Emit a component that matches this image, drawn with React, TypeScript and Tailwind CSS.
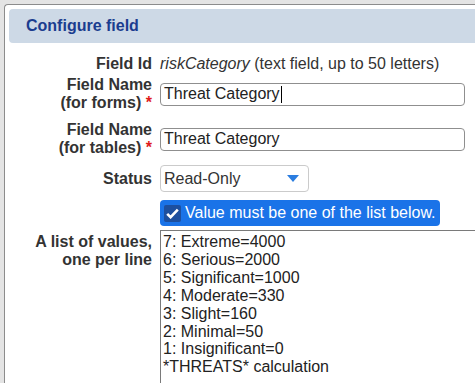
import React from "react";

const Label = ({ children, className = "" }: { children: React.ReactNode; className?: string }) => (
  <div className={"w-[143px] shrink-0 text-right font-bold text-[16px] leading-[18px] text-[#333] " + className}>{children}</div>
);

export default function App() {
  return (
    <div className="w-[475px] h-[383px] overflow-hidden bg-[#e4e4e4] pt-[4px] pl-[4px] font-['Liberation_Sans',Arial,sans-serif]">
      <div className="h-[400px] w-[520px] bg-white border-l border-t border-[#8c8c8c] rounded-tl-[4px] pl-[4px] pt-[4px]">
        <div className="h-[34px] w-[480px] bg-[#cdd9e6] rounded-[4px] pl-[17px] flex items-center">
          <span className="text-[16px] font-bold text-[#1b3d8f]">Configure field</span>
        </div>

        <div className="mt-[12px] flex items-center gap-[8px]">
          <Label>Field Id</Label>
          <div className="text-[16px] leading-[18px] text-[#333] whitespace-nowrap">
            <i>riskCategory</i> (text field, up to 50 letters)
          </div>
        </div>

        <div className="mt-[3px] flex items-center gap-[8px]">
          <Label>
            Field Name
            <br />
            (for forms) <span className="text-[#e01b1b]">*</span>
          </Label>
          <div className="w-[305px] h-[23px] border border-[#8f8f8f] rounded-[4px] pl-[3px] flex items-center text-[16px] text-[#222]">
            Threat Category<span className="inline-block w-[1px] h-[17px] bg-black ml-[1px]" />
          </div>
        </div>

        <div className="mt-[9px] flex items-center gap-[8px]">
          <Label>
            Field Name
            <br />
            (for tables) <span className="text-[#e01b1b]">*</span>
          </Label>
          <div className="w-[305px] h-[23px] border border-[#8f8f8f] rounded-[4px] pl-[3px] flex items-center text-[16px] text-[#222]">
            Threat Category
          </div>
        </div>

        <div className="mt-[8px] flex items-center gap-[8px]">
          <Label>Status</Label>
          <div className="w-[149px] h-[27px] border border-[#cbcbcb] rounded-[4px] pl-[3px] pr-[9px] flex items-center justify-between text-[16px] text-[#333]">
            <span>Read-Only</span>
            <svg width="12" height="7" viewBox="0 0 12 7">
              <path d="M0 0 L12 0 L6 7 Z" fill="#2b7de0" />
            </svg>
          </div>
        </div>

        <div className="mt-[8px] flex items-center gap-[8px]">
          <div className="w-[143px] shrink-0" />
          <div className="w-[280px] h-[26px] bg-[#1a73e8] rounded-[4px] pl-[4px] flex items-center gap-[4px] text-[16px] text-white">
            <div className="w-[17px] h-[17px] bg-[#1d4f9e] rounded-[2px] flex items-center justify-center">
              <svg width="13" height="11" viewBox="0 0 13 11">
                <path d="M1.2 5.8 L4.6 9.2 L11.8 1.6" stroke="white" strokeWidth="2.6" fill="none" strokeLinejoin="miter" />
              </svg>
            </div>
            <span>Value must be one of the list below.</span>
          </div>
        </div>

        <div className="mt-[4px] flex items-start gap-[8px]">
          <Label className="pt-[3px]">
            A list of values,
            <br />
            one per line
          </Label>
          <div className="w-[400px] h-[200px] border-l border-t border-[#7a7a7a] pl-[2px] pt-[2px] text-[16px] leading-[17.9px] text-[#222]">
            <div>7: Extreme=4000</div>
            <div>6: Serious=2000</div>
            <div>5: Significant=1000</div>
            <div>4: Moderate=330</div>
            <div>3: Slight=160</div>
            <div>2: Minimal=50</div>
            <div>1: Insignificant=0</div>
            <div>*THREATS* calculation</div>
          </div>
        </div>
      </div>
    </div>
  );
}
